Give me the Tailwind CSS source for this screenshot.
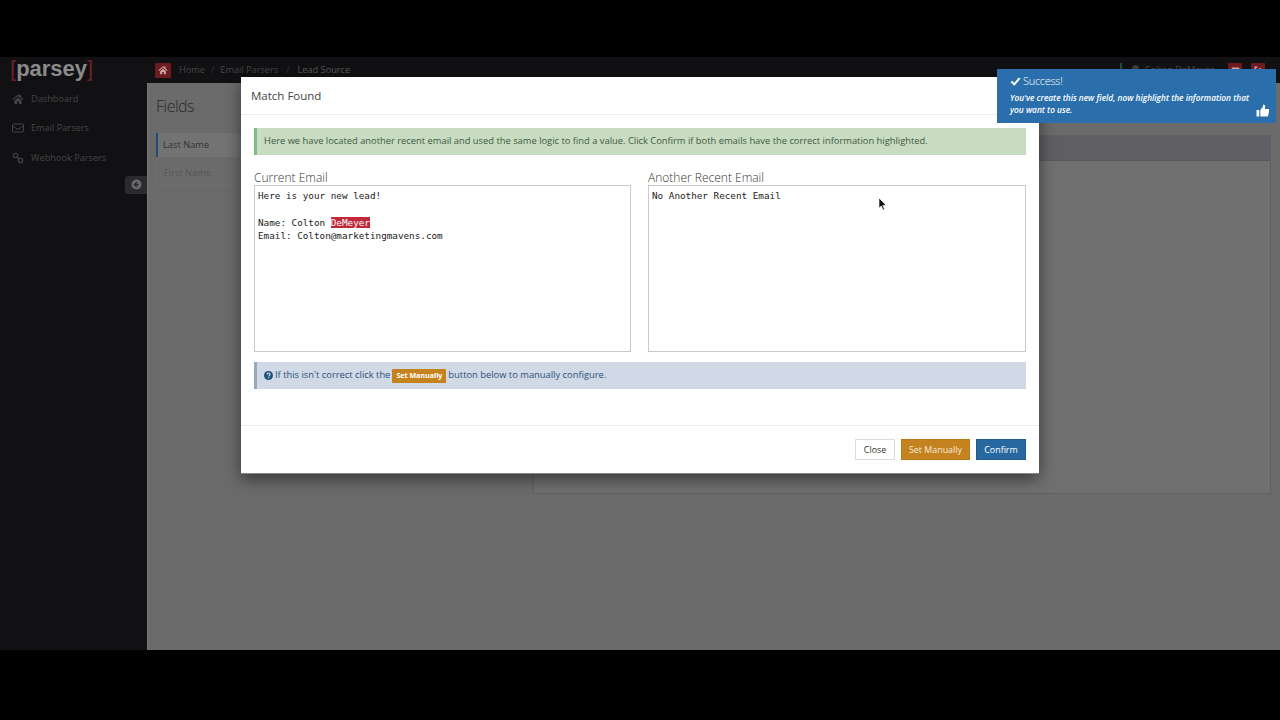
<!DOCTYPE html>
<html lang="en">
<head>
    <meta charset="UTF-8">
    <meta name="viewport" content="width=device-width, initial-scale=1.0">
    <title>Match Found - Parsey</title>
    <script src="https://cdn.jsdelivr.net/npm/@tailwindcss/browser@4"></script>
</head>
<body class="relative w-[1280px] h-[720px] overflow-hidden bg-black font-['Open_Sans',sans-serif]">

    <!-- App frame between the letterbox bars -->
    <div class="mt-[57px] h-[593px] flex">

        <!-- Sidebar -->
        <aside class="w-[147px] shrink-0 bg-[#111113] flex flex-col">
            <div class="h-[23px] pl-[10px] flex items-center text-[22px] leading-none font-bold font-['Liberation_Sans',sans-serif] text-[#8b8b8b]">
                <span class="font-normal text-[#6d2024]">[</span><span>parsey</span><span class="font-normal text-[#6d2024]">]</span>
            </div>
            <nav class="mt-[4px] flex flex-col text-[9.2px] text-[#454547]">
                <a class="h-[29.5px] pl-[12px] flex items-center gap-[7px]">
                    <svg class="w-[12px] h-[12px]" viewBox="0 0 24 24" fill="#454547"><path d="M12 3 1 12.5l1.5 1.7L12 6l9.5 8.2 1.5-1.700L18 8V3h-3v2.400zM5 15v7h5v-5h4v5h5v-7l-7-6z"/></svg>
                    <span>Dashboard</span>
                </a>
                <a class="h-[29.5px] pl-[12px] flex items-center gap-[7px]">
                    <svg class="w-[12px] h-[12px]" viewBox="0 0 24 24" fill="none" stroke="#454547" stroke-width="2"><rect x="1" y="4" width="22" height="16" rx="2"/><path d="m1 8 11 7 11-7"/></svg>
                    <span>Email Parsers</span>
                </a>
                <a class="h-[29.5px] pl-[12px] flex items-center gap-[7px]">
                    <svg class="w-[12px] h-[12px]" viewBox="0 0 24 24" fill="none" stroke="#454547" stroke-width="2.4"><circle cx="7" cy="7" r="4.5"/><circle cx="17" cy="17" r="4.5"/><path d="m10 10 4 4"/></svg>
                    <span>Webhook Parsers</span>
                </a>
            </nav>
            <div class="mt-[3px] self-end w-[22px] h-[18px] bg-[#2b2b2d] rounded-l-[3px] flex items-center justify-center">
                <svg class="w-[11px] h-[11px]" viewBox="0 0 24 24"><circle cx="12" cy="12" r="11" fill="#6a6a6c"/><path d="M13 6.500 7.500 12l5.500 5.500M8 12h9" fill="none" stroke="#2b2b2d" stroke-width="3"/></svg>
            </div>
        </aside>

        <div class="flex-1 flex flex-col">
            <!-- Top bar -->
            <header class="h-[26px] shrink-0 bg-[#111113] flex items-center pl-[8px] pr-[15px] text-[9.2px] text-[#454547]">
                <span class="w-[16px] h-[15px] bg-[#6d1b20] rounded-[1px] flex items-center justify-center">
                    <svg class="w-[10px] h-[10px]" viewBox="0 0 24 24" fill="#c9a5a5"><path d="M12 3 1 12.500l1.500 1.700L12 6l9.500 8.200 1.500-1.700L18 8V3h-3v2.400zM5 15v7h5v-5h4v5h5v-7l-7-6z"/></svg>
                </span>
                <span class="ml-[8px]">Home</span>
                <span class="mx-[6px] text-[#333335]">/</span>
                <span>Email Parsers</span>
                <span class="mx-[8px] text-[#333335]">/</span>
                <span class="text-[#59595a]">Lead Source</span>
                <div class="ml-auto flex items-center">
                    <span class="w-[2px] h-[15px] bg-[#1d4a43]"></span>
                    <svg class="ml-[7px] w-[13px] h-[13px]" viewBox="0 0 24 24" fill="#3c3c3e"><circle cx="12" cy="8" r="6"/><path d="M2 23c0-7 4-9 10-9s10 2 10 9z"/></svg>
                    <span class="ml-[3px]">Colton DeMeyer</span>
                    <span class="ml-[14px] w-[14px] h-[15px] bg-[#6d1b20] rounded-[1px] flex items-center justify-center">
                        <svg class="w-[9px] h-[9px]" viewBox="0 0 24 24" fill="none" stroke="#c9a5a5" stroke-width="4"><path d="M2 6h20M2 13h20"/></svg>
                    </span>
                    <span class="ml-[9px] w-[14px] h-[15px] bg-[#6d1b20] rounded-[1px] flex items-center justify-center">
                        <svg class="w-[9px] h-[9px]" viewBox="0 0 24 24" fill="none" stroke="#c9a5a5" stroke-width="4"><path d="M9 3H3v18h6M8 12h11M15 6l6 6-6 6"/></svg>
                    </span>
                </div>
            </header>

            <!-- Page content, dimmed by the modal backdrop -->
            <main class="flex-1 bg-[#6c6b6c] border-l border-[#777677] pl-[8px] pr-[9px] flex gap-[10px]">
                <section class="w-[367px] shrink-0">
                    <h2 class="mt-[11px] text-[16px] leading-[24px] font-light tracking-[-0.5px] text-[#2a2a2b]">Fields</h2>
                    <ul class="mt-[15px] flex flex-col gap-[4px] text-[9.3px]">
                        <li class="h-[24px] pl-[5px] flex items-center bg-[#747374] border-l-2 border-[#1e4d78] text-[#323234]">Last Name</li>
                        <li class="h-[24px] pl-[7px] flex items-center border border-[#706f70] text-[#565657]">First Name</li>
                    </ul>
                </section>
                <section class="flex-1 mt-[52px] h-[359px] bg-[#717071] border border-[#626162]">
                    <div class="h-[25px] bg-[#5f5e62] border-b border-[#5a595c]"></div>
                </section>
            </main>
        </div>
    </div>

    <!-- Modal -->
    <div class="absolute left-[241px] top-[77px] w-[798px] h-[397px] bg-white border-b border-[#8a898a] flex flex-col text-[#333] shadow-[0_5px_15px_rgba(0,0,0,0.5)]">
        <div class="h-[38px] shrink-0 pl-[10px] flex items-center border-b border-[#ececec] text-[11.5px] text-[#444]">Match Found</div>
        <div class="flex-1 px-[13px] pt-[13px]">
            <div class="h-[27px] pl-[7px] flex items-center bg-[#c9dcc1] border-l-[3px] border-[#82bd86] text-[9.35px] text-[#3e5a41]">Here we have located another recent email and used the same logic to find a value. Click Confirm if both emails have the correct information highlighted.</div>
            <div class="mt-[15px] grid grid-cols-[377px_378px] gap-[17px]">
                <div>
                    <div class="h-[15px] text-[12px] leading-[16px] font-light text-[#333]">Current Email</div>
                    <div class="h-[167px] border border-[#c9c9c9] px-[3px] py-[3px] font-['DejaVu_Sans_Mono',monospace] text-[9.3px] leading-[13.4px] text-[#222]">
                        <p>Here is your new lead!</p>
                        <p class="mt-[13.4px]">Name: Colton <span class="bg-[#c0283c] text-white">DeMeyer</span></p>
                        <p>Email: Colton@marketingmavens.com</p>
                    </div>
                </div>
                <div>
                    <div class="h-[15px] text-[12px] leading-[16px] font-light text-[#333]">Another Recent Email</div>
                    <div class="h-[167px] border border-[#c9c9c9] px-[3px] py-[3px] font-['DejaVu_Sans_Mono',monospace] text-[9.3px] leading-[13.4px] text-[#222]">No Another Recent Email</div>
                </div>
            </div>
            <div class="mt-[10px] h-[27px] pl-[7px] flex items-center bg-[#d1d9e6] border-l-[3px] border-[#95aabc] text-[9.35px] text-[#2b527a]">
                <svg class="w-[9px] h-[9px] mr-[2px]" viewBox="0 0 24 24"><circle cx="12" cy="12" r="12" fill="#1f5480"/><path d="M8 9.500c0-2.500 2-4 4.200-4 2.300 0 4 1.500 4 3.500 0 3-3.700 3-3.700 5.500M12.500 16.500v3" fill="none" stroke="#d1d9e6" stroke-width="3"/></svg>
                <span>If this isn't correct click the</span>
                <span class="ml-[2px] mr-[2px] h-[14px] w-[54px] flex items-center justify-center bg-[#c5831f] rounded-[1px] text-[7.1px] font-bold text-white">Set Manually</span>
                <span>button below to manually configure.</span>
            </div>
        </div>
        <div class="h-[48px] shrink-0 pr-[13px] pt-[13px] flex justify-end items-start gap-[6px] border-t border-[#ececec] text-[8.9px]">
            <button class="w-[40px] h-[21px] pt-[1px] bg-white border border-[#dcdcdc] text-[#333]">Close</button>
            <button class="w-[69px] h-[21px] pt-[1px] bg-[#c5831f] border border-[#b8791c] text-[#f5ead9]">Set Manually</button>
            <button class="w-[50px] h-[21px] pt-[1px] bg-[#26689f] border border-[#215c8e] text-white">Confirm</button>
        </div>
    </div>

    <!-- Success toast -->
    <div class="absolute left-[997px] top-[69px] w-[279px] h-[54px] bg-[#2a6fab] pl-[13px] pr-[6px] pt-[4px] text-white">
        <div class="flex items-center gap-[2px] text-[11px] leading-[15px] font-light tracking-[-0.3px]">
            <svg class="w-[11px] h-[10px]" viewBox="0 0 24 24" fill="none" stroke="white" stroke-width="5"><path d="m2 13 7 7L22 5"/></svg>
            <span>Success!</span>
        </div>
        <p class="mt-[4px] w-[248px] text-[8.3px] leading-[12px] italic font-semibold">You've create this new field, now highlight the information that you want to use.</p>
        <svg class="absolute right-[7px] bottom-[6px] w-[13px] h-[13px]" viewBox="0 0 24 24" fill="white"><path d="M1 11h5v12H1zM8 11l4-5c1-1.500 1-3 1-5 2.500 0 4 1.500 4 4 0 1.500-.5 3-1 4h6c1.500 0 3 1.200 2.500 3l-2 9c-.3 1.200-1.200 2-2.500 2H8z"/></svg>
    </div>

    <!-- Mouse cursor -->
    <svg class="absolute left-[878px] top-[197px] w-[9px] h-[14px]" viewBox="0 0 9 14"><path d="M1 1v10l2.300-2 1.700 4 1.500-.7L4.800 8.500 8 8.200z" fill="#111" stroke="#fff" stroke-width=".6"/></svg>

</body>
</html>
